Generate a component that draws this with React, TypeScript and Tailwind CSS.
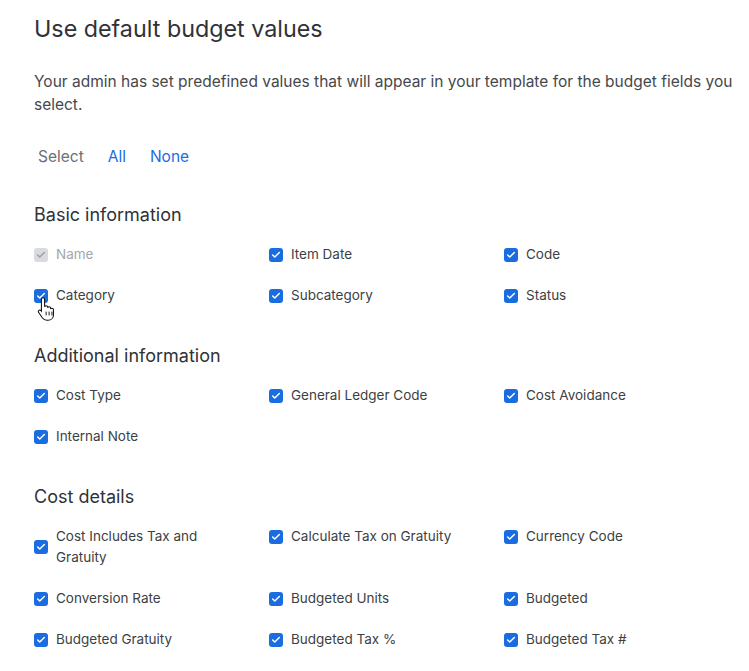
import { Check } from 'lucide-react'

type Field = { label: string; disabled?: boolean; cursor?: boolean }

const sections: { title: string; fields: Field[] }[] = [
  {
    title: 'Basic information',
    fields: [
      { label: 'Name', disabled: true },
      { label: 'Item Date' },
      { label: 'Code' },
      { label: 'Category', cursor: true },
      { label: 'Subcategory' },
      { label: 'Status' },
    ],
  },
  {
    title: 'Additional information',
    fields: [
      { label: 'Cost Type' },
      { label: 'General Ledger Code' },
      { label: 'Cost Avoidance' },
      { label: 'Internal Note' },
    ],
  },
  {
    title: 'Cost details',
    fields: [
      { label: 'Cost Includes Tax and Gratuity' },
      { label: 'Calculate Tax on Gratuity' },
      { label: 'Currency Code' },
      { label: 'Conversion Rate' },
      { label: 'Budgeted Units' },
      { label: 'Budgeted' },
      { label: 'Budgeted Gratuity' },
      { label: 'Budgeted Tax %' },
      { label: 'Budgeted Tax #' },
    ],
  },
]

// mouse pointer hovering the Category checkbox
function HandCursor() {
  return (
    <svg className="absolute left-[3px] top-[7px]" width="19" height="26" viewBox="0 0 16 22">
      <path
        d="M5 1.5c.8 0 1.4.6 1.4 1.4v6.2c.2-.6.7-.9 1.3-.9.8 0 1.3.6 1.3 1.3v.4c.2-.5.7-.8 1.2-.8.8 0 1.3.6 1.3 1.3v.6c.2-.4.6-.6 1.1-.6.7 0 1.3.6 1.3 1.3v4.3c0 2.6-2 4.5-4.6 4.5H8.3c-1.5 0-2.8-.7-3.7-1.9L1.4 14c-.5-.6-.4-1.4.2-1.8.6-.4 1.3-.3 1.8.2l.3.4V2.9C3.7 2.1 4.2 1.5 5 1.5z"
        fill="#fff"
        stroke="#111"
        strokeWidth="0.9"
      />
      <path d="M7.7 13.2v3.2M10.2 13.2v3.2M12.6 13.2v3.2" stroke="#111" strokeWidth="0.8" />
    </svg>
  )
}

function CheckItem({ field }: { field: Field }) {
  return (
    <label className="flex items-center gap-2">
      <span className="relative shrink-0">
        <span
          className={
            field.disabled
              ? 'flex h-[14px] w-[14px] items-center justify-center rounded-[3px] bg-[#d9dbde]'
              : 'flex h-[14px] w-[14px] items-center justify-center rounded-[3px] bg-[#1a6de0]'
          }
        >
          <Check size={10} strokeWidth={3.5} color={field.disabled ? '#9aa0a6' : '#fff'} />
        </span>
        {field.cursor && <HandCursor />}
      </span>
      <span className={field.disabled ? 'text-[#a3a6aa]' : 'text-[#3c3f44]'}>{field.label}</span>
    </label>
  )
}

export default function App() {
  return (
    <div
      className="min-h-screen bg-white pl-[34px] pt-[15px] text-[#3c3f44]"
      style={{ fontFamily: 'Inter, Roboto, sans-serif' }}
    >
      <h1 className="text-[23.3px] leading-[28px] font-normal text-[#2f3237]">Use default budget values</h1>
      <p className="mt-[27px] w-[705px] text-[15.5px] leading-[23px] text-[#45484d]">
        Your admin has set predefined values that will appear in your template for the budget fields you
        select.
      </p>
      <div className="mt-[30px] flex gap-[24px] pl-[4px] text-[15.5px] leading-[22px]">
        <span className="text-[#6c6f74]">Select</span>
        <button className="text-[#1a6de0]">All</button>
        <button className="text-[#1a6de0]">None</button>
      </div>
      <div className="mt-[35px] flex flex-col gap-[38px]">
        {sections.map((s) => (
          <section key={s.title}>
            <h2 className="mb-[17px] text-[18px] leading-[24px] text-[#2f3237]">{s.title}</h2>
            <div className="grid grid-cols-[235px_235px_235px] gap-y-[20px] text-[13.5px] leading-[21px]">
              {s.fields.map((f) => (
                <div key={f.label} className="pr-[40px]">
                  <CheckItem field={f} />
                </div>
              ))}
            </div>
          </section>
        ))}
      </div>
    </div>
  )
}
